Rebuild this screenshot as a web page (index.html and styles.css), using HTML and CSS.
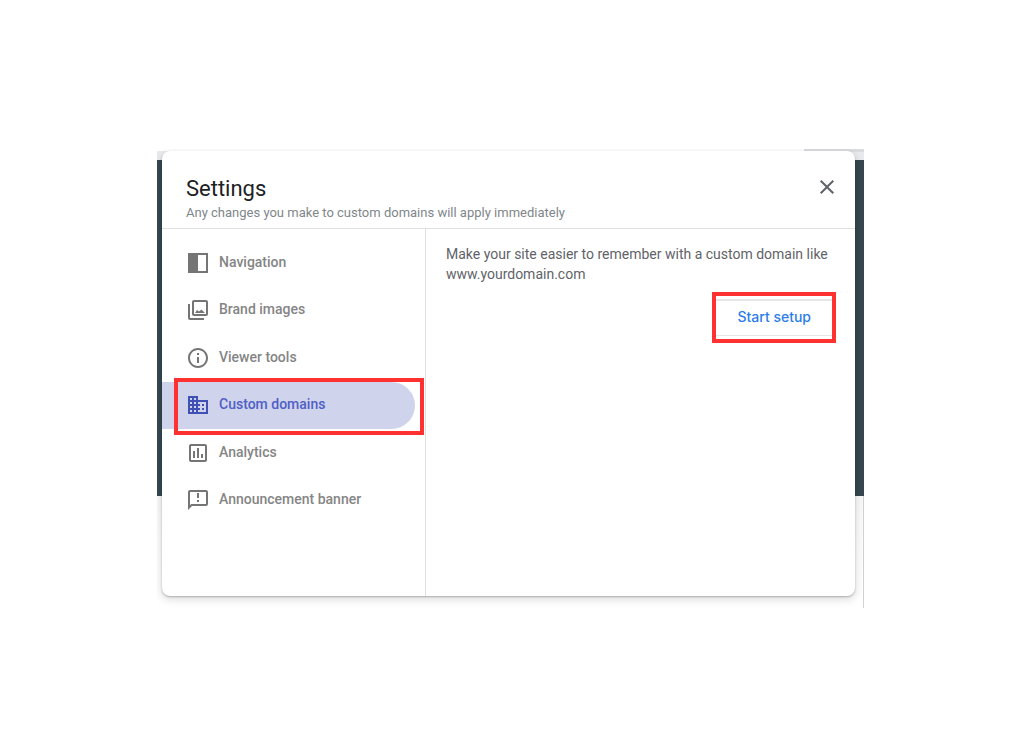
FILE: index.html
```html
<!DOCTYPE html>
<html lang="en">
<head>
    <meta charset="UTF-8">
    <meta name="viewport" content="width=device-width, initial-scale=1.0">
    <title>Settings</title>
    <link rel="stylesheet" href="styles.css">
</head>
<body>
    <main class="backdrop">
        <div class="dialog" role="dialog" aria-labelledby="dialogTitle">
            <header class="dialogHeader">
                <div>
                    <h1 id="dialogTitle" class="title">Settings</h1>
                    <p class="subtitle">Any changes you make to custom domains will apply immediately</p>
                </div>
                <button type="button" class="closeBtn" aria-label="Close">
                    <svg viewBox="0 0 24 24"><path d="M19 6.41L17.59 5 12 10.59 6.41 5 5 6.41 10.59 12 5 17.59 6.41 19 12 13.41 17.59 19 19 17.59 13.41 12z"/></svg>
                </button>
            </header>
            <div class="dialogBody">
                <div class="sidebar">
                    <nav class="menu">
                        <a href="#navigation" class="menuItem">
                            <svg viewBox="0 0 24 24"><path fill-rule="evenodd" d="M2 2h20v20H2zM12 4v16h8V4z"/></svg>
                            <span>Navigation</span>
                        </a>
                        <a href="#images" class="menuItem">
                            <svg viewBox="0 0 24 24"><path d="M20 4v12H8V4h12m0-2H8c-1.1 0-2 .9-2 2v12c0 1.1.9 2 2 2h12c1.1 0 2-.9 2-2V4c0-1.1-.9-2-2-2zM9 15l2-3 2 1.500 2.500-2L19 15zM2 6v14c0 1.100.9 2 2 2h14v-2H4V6H2z"/></svg>
                            <span>Brand images</span>
                        </a>
                        <a href="#tools" class="menuItem">
                            <svg viewBox="0 0 24 24"><path d="M11 7h2v2h-2zm0 4h2v6h-2zm1-9C6.480 2 2 6.480 2 12s4.480 10 10 10 10-4.480 10-10S17.520 2 12 2zm0 18c-4.410 0-8-3.590-8-8s3.590-8 8-8 8 3.590 8 8-3.590 8-8 8z"/></svg>
                            <span>Viewer tools</span>
                        </a>
                        <a href="#domains" class="menuItem selected" aria-current="page">
                            <svg viewBox="0 0 24 24"><path d="M12 7V3H2v18h20V7H12zM6 19H4v-2h2v2zm0-4H4v-2h2v2zm0-4H4V9h2v2zm0-4H4V5h2v2zm4 12H8v-2h2v2zm0-4H8v-2h2v2zm0-4H8V9h2v2zm0-4H8V5h2v2zm10 12h-8v-2h2v-2h-2v-2h2v-2h-2V9h8v10zm-2-8h-2v2h2v-2zm0 4h-2v2h2v-2z"/></svg>
                            <span>Custom domains</span>
                        </a>
                        <a href="#analytics" class="menuItem">
                            <svg viewBox="0 0 24 24"><path d="M19 3H5c-1.100 0-2 .9-2 2v14c0 1.100.9 2 2 2h14c1.100 0 2-.9 2-2V5c0-1.100-.9-2-2-2zm0 16H5V5h14v14zM7 10h2v7H7zm4-3h2v10h-2zm4 6h2v4h-2z"/></svg>
                            <span>Analytics</span>
                        </a>
                        <a href="#banner" class="menuItem">
                            <svg viewBox="0 0 24 24"><path d="M20 2H4c-1.100 0-1.990.9-1.990 2L2 22l4-4h14c1.100 0 2-.9 2-2V4c0-1.100-.9-2-2-2zm0 14H5.170L4 17.170V4h16v12zm-9-4h2v2h-2zm0-7h2v5h-2z"/></svg>
                            <span>Announcement banner</span>
                        </a>
                    </nav>
                </div>
                <section class="content">
                    <p class="intro">Make your site easier to remember with a custom domain like www.yourdomain.com</p>
                    <div class="highlight">
                        <button type="button" class="setupBtn">Start setup</button>
                    </div>
                </section>
            </div>
        </div>
    </main>
</body>
</html>
```
FILE: styles.css
```css
*{
    box-sizing: border-box;
    margin: 0; padding: 0;
}
body{
    padding: 149px 160px 137px 157px;
    background-color: white;
    font-family: Roboto, "Liberation Sans", sans-serif;
}
.backdrop{
    padding: 2px 9px 12px 5px;
    overflow: hidden;
    background:
        linear-gradient(#dadce0, #dadce0) right top / 60px 3px no-repeat,
        linear-gradient(#d0d2d4, #d0d2d4) right bottom / 1px 112px no-repeat,
        linear-gradient(transparent 2px, #e8eaed 2px 11px, #37474f 11px 347px, #f8f8f8 347px, white);
}
.dialog{
    display: flex;
    flex-direction: column;
    background-color: white;
    border-radius: 8px;
    box-shadow: 0 1px 2px rgba(0, 0, 0, 0.25), 0 3px 8px 1px rgba(0, 0, 0, 0.12);
}
.dialogHeader{
    display: flex;
    justify-content: space-between;
    align-items: flex-start;
    padding: 24px 16px 5px 24px;
    border-bottom: 1px solid #e0e0e0;
}
.title{
    color: #202124;
    font-size: 22px;
    font-weight: 400;
    line-height: 28px;
}
.subtitle{
    color: #80868b;
    font-size: 13px;
    line-height: 20px;
}
.closeBtn{
    width: 24px;
    height: 24px;
    border: 0;
    background-color: transparent;
    fill: #5f6368;
}
.dialogBody{
    display: flex;
}
.sidebar{
    flex: none;
    width: 264px;
    padding: 10px 10px 72px 0;
    border-right: 1px solid #e0e0e0;
}
.menu{
    display: flex;
    flex-direction: column;
    height: 285px;
}
.menuItem{
    flex: 1;
    display: flex;
    align-items: center;
    gap: 9px;
    padding-left: 24px;
    border-radius: 0 24px 24px 0;
    color: #858585;
    fill: #757575;
    font-size: 14px;
    font-weight: 500;
    text-decoration: none;
}
.menuItem svg{
    width: 24px;
    height: 24px;
}
.menuItem span{
    padding-bottom: 2px;
}
.selected{
    position: relative;
    background-color: #d0d3ec;
    color: #4f5fc4;
    fill: #3f51b5;
}
.selected::after{
    content: "";
    position: absolute;
    top: -4px;
    right: -9px;
    bottom: -6px;
    left: 12px;
    border: 4px solid #ff3131;
}
.content{
    flex: 1;
    display: flex;
    flex-direction: column;
    align-items: flex-end;
    gap: 8px;
    padding: 15px 19px 15px 20px;
}
.intro{
    align-self: stretch;
    color: #5f6368;
    font-size: 14px;
    line-height: 20px;
}
.highlight{
    padding: 3px 0;
    border: 4px solid #ff3131;
}
.setupBtn{
    padding: 7px 21px 9px;
    border: solid #e4e6e8;
    border-width: 2px 0 1px;
    background-color: white;
    color: #2b7de9;
    font-family: Inter, sans-serif;
    font-size: 14px;
    font-weight: 500;
    line-height: 18px;
}
```
